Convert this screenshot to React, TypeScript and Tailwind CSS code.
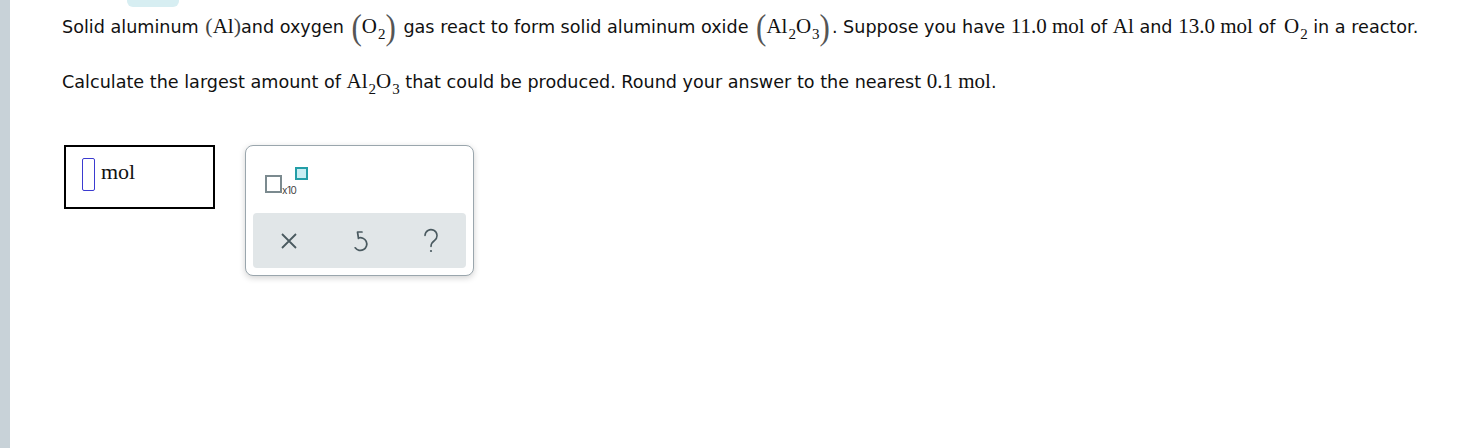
import React from "react";

const sans = "font-['DejaVu_Sans',Verdana,sans-serif]";
const serif = "font-['Liberation_Serif','Times_New_Roman',serif]";

function M({ children }: { children: React.ReactNode }) {
  return <span className={`${serif} text-[21px]`}>{children}</span>;
}

function Sub({ children }: { children: React.ReactNode }) {
  return <span className="relative top-[6px] ml-[1px] text-[15px] leading-none">{children}</span>;
}

function Paren({ children, big }: { children: React.ReactNode; big?: boolean }) {
  const p = big
    ? "inline-block align-[-4px] text-[31px] font-light leading-none text-[#555] scale-y-[1.15]"
    : "inline-block text-[22px] leading-none text-[#444]";
  return (
    <span className={`${serif} text-[21px] ${big ? "mx-[2px]" : "ml-[1px]"}`}>
      <span className={p}>(</span>
      {children}
      <span className={p}>)</span>
    </span>
  );
}

export default function App() {
  return (
    <div className="flex h-[448px] w-[1472px] bg-white text-black">
      <div className="w-[10px] shrink-0 bg-[#c8d2d8]" />
      <div className="relative flex-1">
        {/* tab peeking at the top */}
        <div className="absolute left-[117px] top-0 h-[7px] w-[52px] rounded-b-[6px] bg-[#d7eef2]" />

        <div className={`${sans} pl-[52px] pt-[11px] text-[17.6px] text-[#111]`}>
          <p className="h-[28px] leading-[28px] whitespace-nowrap">
            Solid aluminum <Paren>Al</Paren>and oxygen{" "}
            <Paren big>
              O<Sub>2</Sub>
            </Paren>{" "}
            gas react to form solid aluminum oxide{" "}
            <Paren big>
              Al<Sub>2</Sub>O<Sub>3</Sub>
            </Paren>
            . Suppose you have <M>11.0 mol</M> of <M>Al</M> and <M>13.0 mol</M> of{" "}
            <M>
              <span className="ml-[3px]">O</span>
              <Sub>2</Sub>
            </M>{" "}
            in a reactor.
          </p>
          <p className="mt-[28px] h-[28px] leading-[28px] whitespace-nowrap">
            Calculate the largest amount of{" "}
            <M>
              Al<Sub>2</Sub>O<Sub>3</Sub>
            </M>{" "}
            that could be produced. Round your answer to the nearest <M>0.1 mol</M>.
          </p>

          <div className="mt-[50px] flex items-start gap-[30px] pl-[2px]">
            <div className="flex h-[64px] w-[151px] items-start border-2 border-black pl-[16px] pt-[11px]">
              <div className="h-[33px] w-[13px] rounded-[2px] border border-[#3b3bd0]" />
              <span className={`${serif} ml-[6px] text-[22px] leading-[28px] text-[#111]`}>mol</span>
            </div>

            <div className="h-[131px] w-[229px] rounded-[8px] border border-[#9aa6ad] bg-white p-[7px] shadow-[0_2px_6px_rgba(0,0,0,0.18)]">
              <div className="flex h-[60px] items-start pl-[12px] pt-[7px]">
                <div className="mt-[15px] h-[18px] w-[17px] border-2 border-[#7b8a8f]" />
                <span className="mt-[25px] font-['Inter',sans-serif] text-[10px] leading-none tracking-[-0.5px] text-[#444]">x10</span>
                <div className="mt-[7px] -ml-[1px] h-[13px] w-[13px] border-2 border-[#239ea7] bg-[#c9eef3]" />
              </div>
              <div className="grid h-[55px] grid-cols-3 items-center justify-items-center rounded-[4px] bg-[#e1e6e8]">
                <svg width="18" height="18" viewBox="0 0 18 18">
                  <path d="M2 2 L16 16 M16 2 L2 16" stroke="#4a5a60" strokeWidth="1.8" fill="none" />
                </svg>
                <svg width="18" height="24" viewBox="0 0 18 24">
                  <path
                    d="M11 3 H6.5 L7.5 9.5 M7.3 9 A6.4 6.4 0 1 1 4.2 18.8"
                    stroke="#4a5a60"
                    strokeWidth="1.7"
                    fill="none"
                    strokeLinejoin="round"
                    strokeLinecap="round"
                  />
                </svg>
                <svg width="18" height="26" viewBox="0 0 18 26">
                  <path
                    d="M3 7.5 A6 6 0 1 1 12.5 12.5 C10 14.2 9 15.5 9 18.5"
                    stroke="#4a5a60"
                    strokeWidth="1.6"
                    fill="none"
                    strokeLinecap="round"
                  />
                  <circle cx="9" cy="23" r="1.1" fill="#4a5a60" />
                </svg>
              </div>
            </div>
          </div>
        </div>
      </div>
    </div>
  );
}
